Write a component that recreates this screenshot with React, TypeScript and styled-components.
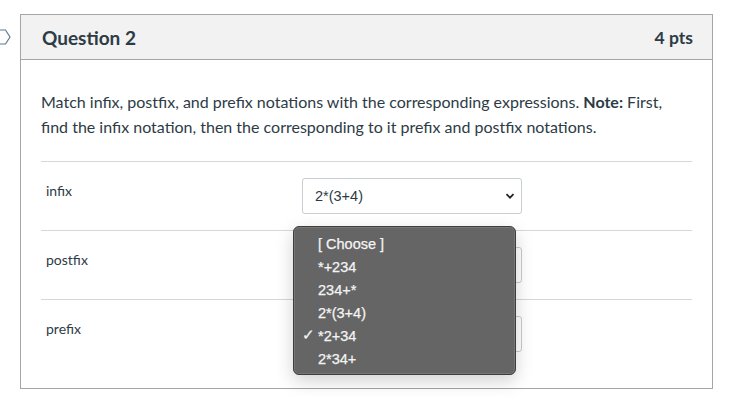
import React from "react";
import styled, { createGlobalStyle } from "styled-components";

const Global = createGlobalStyle`
  html, body {
    margin: 0;
    padding: 0;
    background: #fff;
  }
  body {
    font-family: Lato, "Noto Sans", sans-serif;
    color: #2d3b45;
  }
`;

const Page = styled.div`
  position: relative;
  width: 734px;
  height: 397px;
  padding: 14px 0 0 20px;
  box-sizing: border-box;
`;

const Flag = styled.svg`
  position: absolute;
  left: -4px;
  top: 29px;
`;

const Card = styled.div`
  width: 693px;
  height: 375px;
  box-sizing: border-box;
  border: 1px solid #a5a5a5;
  position: relative;
`;

const Header = styled.div`
  height: 45px;
  box-sizing: border-box;
  background: #f2f2f2;
  border-bottom: 1px solid #a5a5a5;
  display: flex;
  align-items: center;
  justify-content: space-between;
  padding: 0 19px 0 21px;
`;

const Title = styled.h2`
  margin: 0;
  font-size: 19px;
  font-weight: 700;
  color: #2d3b45;
`;

const Points = styled.div`
  font-size: 17.5px;
  font-weight: 700;
  color: #2d3b45;
`;

const Body = styled.div`
  padding: 29px 20px 0 20px;
`;

const Text = styled.p`
  margin: 0 0 22px 0;
  font-size: 16px;
  line-height: 25px;
  color: #2d3b45;
`;

const Row = styled.div`
  border-top: 1px solid #d7d7d7;
  height: 69px;
  box-sizing: border-box;
  display: flex;
  align-items: flex-start;
  padding-top: 16px;
`;

const Label = styled.div`
  width: 261px;
  padding: 4px 0 0 5px;
  box-sizing: border-box;
  font-size: 14px;
  color: #2d3b45;
`;

const SelectBox = styled.div`
  width: 220px;
  height: 36px;
  box-sizing: border-box;
  border: 1px solid #c7cdd1;
  border-radius: 3px;
  display: flex;
  align-items: center;
  justify-content: space-between;
  padding: 0 6px 0 12px;
  font-family: "Liberation Sans", Arial, sans-serif;
  font-size: 14.5px;
  color: #2d3b45;
  background: #fff;
`;

const Menu = styled.div`
  position: absolute;
  left: 272px;
  top: 211px;
  width: 223px;
  height: 149px;
  box-sizing: border-box;
  background: #646564;
  border: 1px solid #3c3d3c;
  border-radius: 6px;
  box-shadow: 0 6px 18px rgba(0, 0, 0, 0.18), inset 0 0 0 1px rgba(255, 255, 255, 0.12);
  padding: 5px 0 0 0;
  font-family: "Liberation Sans", Arial, sans-serif;
  font-size: 14.5px;
  color: #f4f4f4;
  -webkit-text-stroke: 0.25px #f4f4f4;
`;

const Item = styled.div`
  height: 23px;
  display: flex;
  align-items: center;
  padding-left: 24px;
  position: relative;
`;

const Check = styled.span`
  position: absolute;
  left: 8px;
  top: 2px;
  font-size: 15px;
`;

const Chevron = () => (
  <svg width="10" height="10" viewBox="0 0 10 10">
    <path d="M1.5 3.2 L5 6.7 L8.5 3.2" fill="none" stroke="#222" strokeWidth="1.8" />
  </svg>
);

const rows = [
  { label: "infix", value: "2*(3+4)" },
  { label: "postfix", value: "" },
  { label: "prefix", value: "" },
];

const options = ["[ Choose ]", "*+234", "234+*", "2*(3+4)", "*2+34", "2*34+"];

export default function App() {
  return (
    <>
      <Global />
      <Page>
        <Flag width="15" height="16" viewBox="0 0 15 16">
          <path d="M0.5 1 H9.5 L14 8 L9.5 15 H0.5" fill="none" stroke="#5d7b8e" strokeWidth="1.2" />
        </Flag>
        <Card>
          <Header>
            <Title>Question 2</Title>
            <Points>4 pts</Points>
          </Header>
          <Body>
            <Text>
              Match infix, postfix, and prefix notations with the corresponding expressions.{" "}
              <strong>Note:</strong> First, find the infix notation, then the corresponding to it prefix and
              postfix notations.
            </Text>
            {rows.map((r) => (
              <Row key={r.label}>
                <Label>{r.label}</Label>
                <SelectBox>
                  <span>{r.value}</span>
                  <Chevron />
                </SelectBox>
              </Row>
            ))}
          </Body>
          <Menu>
            {options.map((o) => (
              <Item key={o}>
                {o === "*2+34" && <Check>✓</Check>}
                {o}
              </Item>
            ))}
          </Menu>
        </Card>
      </Page>
    </>
  );
}
